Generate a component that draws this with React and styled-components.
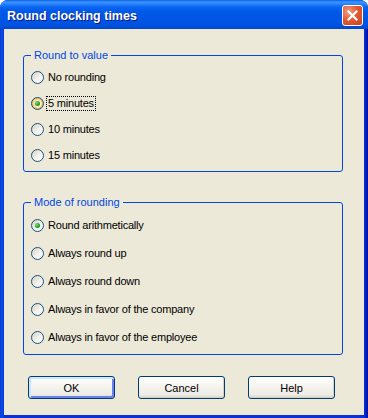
import React from "react";
import styled, { createGlobalStyle } from "styled-components";

const GlobalStyle = createGlobalStyle`
  html, body {
    margin: 0;
    padding: 0;
    background: #ffffff;
  }
  body {
    font-family: "Liberation Sans", Arial, sans-serif;
    font-size: 11px;
    color: #000;
  }
`;

const Window = styled.div`
  width: 368px;
  height: 418px;
  display: flex;
  flex-direction: column;
  border-radius: 8px 8px 0 0;
  overflow: hidden;
  background: linear-gradient(90deg, #0838d4 0, #0a4fe6 2px, #0831d9 4px, #0831d9 calc(100% - 4px), #0019b0 calc(100% - 1px), #001090 100%);
`;

const TitleBar = styled.div`
  height: 29px;
  flex: none;
  display: flex;
  align-items: center;
  justify-content: space-between;
  padding: 2px 5px 0 7px;
  box-sizing: border-box;
  background: linear-gradient(
    180deg,
    #0a5fea 0,
    #3d95ff 2px,
    #2a84fc 4px,
    #0a66f2 7px,
    #0058e6 12px,
    #0055e5 70%,
    #0052df 88%,
    #0046d0 100%
  );
`;

const Title = styled.span`
  color: #fff;
  font-family: "Liberation Sans", Arial, sans-serif;
  font-weight: bold;
  font-size: 12.5px;
  text-shadow: 1px 1px 0 #0a1883;
`;

const CloseButton = styled.div`
  width: 21px;
  height: 21px;
  box-sizing: border-box;
  border: 1px solid #fff;
  border-radius: 3px;
  background: radial-gradient(circle at 30% 30%, #f2a088 0, #e35a33 45%, #c8401f 100%);
  display: flex;
  align-items: center;
  justify-content: center;
`;

const Body = styled.div`
  flex: 1;
  margin: 0 4px 3px 4px;
  background: #ece9d8;
  padding: 20px 21px 0 19px;
  display: flex;
  flex-direction: column;
`;

const Group = styled.fieldset`
  margin: ${(p) => p.$top || 0}px 0 0 0;
  padding: 2px 7px 3px 7px;
  border: 1px solid #0046e6;
  border-radius: 3px;
  display: flex;
  flex-direction: column;
`;

const Legend = styled.legend`
  padding: 0 3px;
  line-height: 13px;
  color: #0046e6;
  font-size: 11px;
`;

const Row = styled.label`
  height: ${(p) => p.$h}px;
  display: flex;
  align-items: center;
  gap: 3px;
  letter-spacing: -0.2px;
`;

const Radio = styled.span`
  position: relative;
  width: 13px;
  height: 13px;
  flex: none;
  box-sizing: border-box;
  border-radius: 50%;
  border: 1px solid #1c5180;
  background: linear-gradient(135deg, #d6d1c4 0%, #f2f1ec 55%, #ffffff 100%);
  box-shadow: ${(p) =>
    p.$hover ? "inset 0 0 0 1px #f8b636, inset 0 0 0 2px #fedf9c" : "none"};

  &::after {
    content: "";
    display: ${(p) => (p.$checked ? "block" : "none")};
    position: absolute;
    left: 3px;
    top: 3px;
    width: 5px;
    height: 5px;
    border-radius: 50%;
    background: radial-gradient(circle at 35% 35%, #7be07a 0, #21a121 55%, #0b8e0b 100%);
  }
`;

const Caption = styled.span`
  padding: 0 1px;
  line-height: 13px;
  outline: ${(p) => (p.$focus ? "1px dotted #000" : "none")};
`;

const ButtonRow = styled.div`
  display: flex;
  gap: 23px;
  margin: 21px 0 0 5px;
`;

const Button = styled.button`
  width: 87px;
  height: 23px;
  padding: 0;
  border: 1px solid #003c74;
  border-radius: 3px;
  font-family: "Liberation Sans", Arial, sans-serif;
  font-size: 11px;
  color: #000;
  background: linear-gradient(180deg, #ffffff 0%, #f6f5f0 40%, #ecebe6 85%, #d6d0c5 100%);
  box-shadow: ${(p) =>
    p.$default
      ? "inset 1px 1px 0 1px #cee7ff, inset -1px -1px 0 1px #6982ee"
      : "inset -1px -1px 0 0 #d8d2c6"};
`;

const roundValues = [
  { label: "No rounding" },
  { label: "5 minutes", checked: true, hover: true, focus: true },
  { label: "10 minutes" },
  { label: "15 minutes" },
];

const modes = [
  { label: "Round arithmetically", checked: true },
  { label: "Always round up" },
  { label: "Always round down" },
  { label: "Always in favor of the company" },
  { label: "Always in favor of the employee" },
];

function RadioRow({ label, checked, hover, focus, h }) {
  return (
    <Row $h={h}>
      <Radio $checked={checked} $hover={hover} />
      <Caption $focus={focus}>{label}</Caption>
    </Row>
  );
}

export default function App() {
  return (
    <>
      <GlobalStyle />
      <Window>
        <TitleBar>
          <Title>Round clocking times</Title>
          <CloseButton>
            <svg width="11" height="11" viewBox="0 0 11 11">
              <path d="M1.5 1.5 L9.5 9.5 M9.5 1.5 L1.5 9.5" stroke="#fff" strokeWidth="2.2" strokeLinecap="square" />
            </svg>
          </CloseButton>
        </TitleBar>
        <Body>
          <Group>
            <Legend>Round to value</Legend>
            {roundValues.map((r) => (
              <RadioRow key={r.label} h={26} {...r} />
            ))}
          </Group>
          <Group $top={24}>
            <Legend>Mode of rounding</Legend>
            {modes.map((r) => (
              <RadioRow key={r.label} h={28} {...r} />
            ))}
          </Group>
          <ButtonRow>
            <Button $default>OK</Button>
            <Button>Cancel</Button>
            <Button>Help</Button>
          </ButtonRow>
        </Body>
      </Window>
    </>
  );
}
